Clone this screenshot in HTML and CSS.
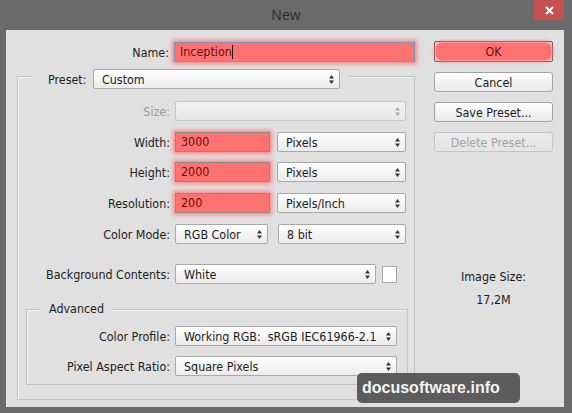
FILE: index.html
```html
<!DOCTYPE html>
<html>
<head>
<meta charset="utf-8">
<title>New</title>
<link rel="stylesheet" href="styles.css">
</head>
<body>
<div class="window">
  <div class="titlebar">
    <span></span>
    <span class="title">New</span>
    <span class="close-wrap">
      <span class="close">
        <svg width="9" height="9" viewBox="0 0 9 9"><path d="M1 1L8 8M8 1L1 8" stroke="#fff" stroke-width="2" fill="none"/></svg>
      </span>
    </span>
  </div>
  <div class="dialog">
    <div class="main">
      <div class="row name-row">
        <span class="lbl lbl-top">Name:</span>
        <div class="input hl name-field">Inception<span class="caret"></span></div>
      </div>
      <div class="group outer">
        <div class="legend preset-legend">
          <span class="preset-lbl">Preset:</span>
          <div class="select w-preset"><span>Custom</span><svg class="arr" width="5" height="9" viewBox="0 0 5 9"><path d="M2.5 0L5 3.5H0Z M0 5.5H5L2.5 9Z"/></svg></div>
        </div>
        <div class="row r-size">
          <span class="lbl disabled-lbl">Size:</span>
          <div class="select disabled w-size"><span></span><svg class="arr" width="5" height="9" viewBox="0 0 5 9"><path d="M2.5 0L5 3.5H0Z M0 5.5H5L2.5 9Z"/></svg></div>
        </div>
        <div class="row r-width">
          <span class="lbl">Width:</span>
          <div class="input hl w-val">3000</div>
          <div class="select w-unit"><span>Pixels</span><svg class="arr" width="5" height="9" viewBox="0 0 5 9"><path d="M2.5 0L5 3.5H0Z M0 5.5H5L2.5 9Z"/></svg></div>
        </div>
        <div class="row r-height">
          <span class="lbl">Height:</span>
          <div class="input hl w-val">2000</div>
          <div class="select w-unit"><span>Pixels</span><svg class="arr" width="5" height="9" viewBox="0 0 5 9"><path d="M2.5 0L5 3.5H0Z M0 5.5H5L2.5 9Z"/></svg></div>
        </div>
        <div class="row r-res">
          <span class="lbl">Resolution:</span>
          <div class="input hl w-val">200</div>
          <div class="select w-unit"><span>Pixels/Inch</span><svg class="arr" width="5" height="9" viewBox="0 0 5 9"><path d="M2.5 0L5 3.5H0Z M0 5.5H5L2.5 9Z"/></svg></div>
        </div>
        <div class="row r-mode">
          <span class="lbl">Color Mode:</span>
          <div class="select w-mode"><span>RGB Color</span><svg class="arr" width="5" height="9" viewBox="0 0 5 9"><path d="M2.5 0L5 3.5H0Z M0 5.5H5L2.5 9Z"/></svg></div>
          <div class="select w-bit"><span>8 bit</span><svg class="arr" width="5" height="9" viewBox="0 0 5 9"><path d="M2.5 0L5 3.5H0Z M0 5.5H5L2.5 9Z"/></svg></div>
        </div>
        <div class="row r-bg">
          <span class="lbl">Background Contents:</span>
          <div class="select w-bg"><span>White</span><svg class="arr" width="5" height="9" viewBox="0 0 5 9"><path d="M2.5 0L5 3.5H0Z M0 5.5H5L2.5 9Z"/></svg></div>
          <div class="swatch"></div>
        </div>
        <div class="group adv">
          <div class="legend adv-legend">Advanced</div>
          <div class="row r-profile">
            <span class="lbl lbl-adv">Color Profile:</span>
            <div class="select w-adv"><span>Working RGB:&nbsp; sRGB IEC61966-2.1</span><svg class="arr" width="5" height="9" viewBox="0 0 5 9"><path d="M2.5 0L5 3.5H0Z M0 5.5H5L2.5 9Z"/></svg></div>
          </div>
          <div class="row r-pixel">
            <span class="lbl lbl-adv">Pixel Aspect Ratio:</span>
            <div class="select w-adv"><span>Square Pixels</span><svg class="arr" width="5" height="9" viewBox="0 0 5 9"><path d="M2.5 0L5 3.5H0Z M0 5.5H5L2.5 9Z"/></svg></div>
          </div>
        </div>
      </div>
    </div>
    <div class="side">
      <div class="btn ok"><span>OK</span></div>
      <div class="btn">Cancel</div>
      <div class="btn">Save Preset...</div>
      <div class="btn btn-disabled">Delete Preset...</div>
      <div class="size-label">Image Size:</div>
      <div class="size-value">17,2M</div>
    </div>
  </div>
  <div class="watermark">docusoftware.info</div>
</div>
</body>
</html>
```

FILE: styles.css
```css
* { box-sizing: border-box; }

body {
  margin: 0;
  background: #6a6a6a;
  font-family: "DejaVu Sans Condensed", "DejaVu Sans", sans-serif;
  font-size: 12.4px;
  color: #1c1c1c;
}

.window {
  position: relative;
  width: 572px;
  height: 413px;
  background: #6a6a6a;
  overflow: hidden;
}

.titlebar {
  height: 30px;
  display: grid;
  grid-template-columns: 1fr auto 1fr;
}

.title {
  font-family: "Open Sans", sans-serif;
  font-size: 14px;
  line-height: 30px;
  color: #2c2c2c;
}

.close-wrap {
  display: flex;
  justify-content: flex-end;
  align-items: flex-start;
  padding-right: 8px;
}

.close {
  width: 30px;
  height: 20px;
  background: #c75050;
  display: flex;
  align-items: center;
  justify-content: center;
}

.dialog {
  display: flex;
  align-items: flex-start;
  margin: 0 8px 0 6px;
  height: 377px;
  background: #e0e0e0;
}

.main {
  margin-left: 11px;
  width: 398px;
}

.row {
  display: flex;
  align-items: center;
  height: 20px;
}

.lbl {
  width: 157px;
  padding-right: 5px;
  text-align: right;
  white-space: nowrap;
}

.lbl-top { width: 158px; }
.lbl-adv { width: 148px; }
.disabled-lbl { color: #9c9c9c; }

.name-row { margin-top: 12px; }

.input {
  height: 20px;
  line-height: 18px;
  padding-left: 5px;
  border: 1px solid #8a8a8a;
  white-space: nowrap;
}

.hl {
  background: #ff7272;
  color: #6e0b0b;
  box-shadow: 0 0 4px 2px rgba(255, 110, 110, 0.75);
}

.name-field {
  width: 241px;
  border-color: #7d95b8;
  flex-shrink: 0;
}

.caret {
  display: inline-block;
  width: 1px;
  height: 14px;
  background: #111;
  vertical-align: -3px;
}

.group {
  border: 1px solid #c3c3c3;
  box-shadow: inset 1px 1px 0 #f2f2f2;
}

.outer {
  margin-top: 14px;
  padding-bottom: 14px;
}

.legend {
  background: #e0e0e0;
  width: fit-content;
  margin-top: -8px;
}

.preset-legend {
  display: flex;
  align-items: center;
  margin-left: 14px;
  padding: 0 8px 0 16px;
  height: 20px;
}

.preset-lbl { width: 45px; }

.select {
  height: 20px;
  display: flex;
  align-items: center;
  justify-content: space-between;
  padding: 0 5px 0 8px;
  border: 1px solid #a8a8a8;
  border-radius: 2px;
  background: linear-gradient(#fefefe, #ececec);
  white-space: nowrap;
  flex-shrink: 0;
}

.arr { fill: #333; flex-shrink: 0; }

.disabled { border-color: #c6c6c6; background: linear-gradient(#f2f2f2, #e8e8e8); }
.disabled .arr { fill: #a8a8a8; }

.w-preset { width: 247px; }
.w-size { width: 231px; }
.w-val { width: 95px; }
.w-unit { width: 129px; margin-left: 7px; }
.w-mode { width: 93px; }
.w-bit { width: 128px; margin-left: 10px; }
.w-bg { width: 201px; }
.w-adv { width: 222px; }

.swatch {
  width: 15px;
  height: 17px;
  margin-left: 6px;
  background: #fff;
  border: 1px solid #a8a8a8;
}

.r-size { margin-top: 12px; }
.r-width { margin-top: 11px; }
.r-height { margin-top: 10px; }
.r-res { margin-top: 11px; }
.r-mode { margin-top: 11px; }
.r-bg { margin-top: 20px; }

.adv {
  margin: 25px 6px 0 8px;
  padding-bottom: 8px;
}

.adv-legend {
  margin-left: 14px;
  padding: 0 7px 0 8px;
  height: 14px;
  line-height: 14px;
}

.r-profile { margin-top: 10px; }
.r-pixel { margin-top: 10px; }

.side {
  margin-left: 19px;
  width: 119px;
  display: flex;
  flex-direction: column;
}

.btn {
  height: 20px;
  margin-top: 10px;
  border: 1px solid #a3a3a3;
  border-radius: 3px;
  background: linear-gradient(#fefefe, #e9e9e9);
  display: flex;
  align-items: center;
  justify-content: center;
  color: #1c1c1c;
}

.ok {
  margin-top: 11px;
  height: 21px;
  border: 1px solid #5c5c5c;
  background: #f2f2f2;
  padding: 1px;
  border-radius: 2px;
}

.ok span {
  flex: 1;
  align-self: stretch;
  display: flex;
  align-items: center;
  justify-content: center;
  background: #ff7272;
  color: #6e0b0b;
  border-radius: 6px;
  box-shadow: 0 0 3px 2px rgba(255, 110, 110, 0.8);
}

.btn-disabled {
  color: #a2a2a2;
  border-color: #c4c4c4;
  background: linear-gradient(#ececec, #e4e4e4);
}

.size-label {
  margin-top: 117px;
  line-height: 16px;
  text-align: center;
}

.size-value {
  margin-top: 7px;
  line-height: 16px;
  text-align: center;
}

.watermark {
  position: absolute;
  left: 357px;
  top: 373px;
  width: 163px;
  height: 30px;
  padding-left: 5px;
  border-radius: 5px;
  background: rgba(80, 80, 80, 0.92);
  color: #f4f4f4;
  font-family: "Liberation Sans", Arial, sans-serif;
  font-weight: bold;
  font-size: 16px;
  line-height: 30px;
}
```
